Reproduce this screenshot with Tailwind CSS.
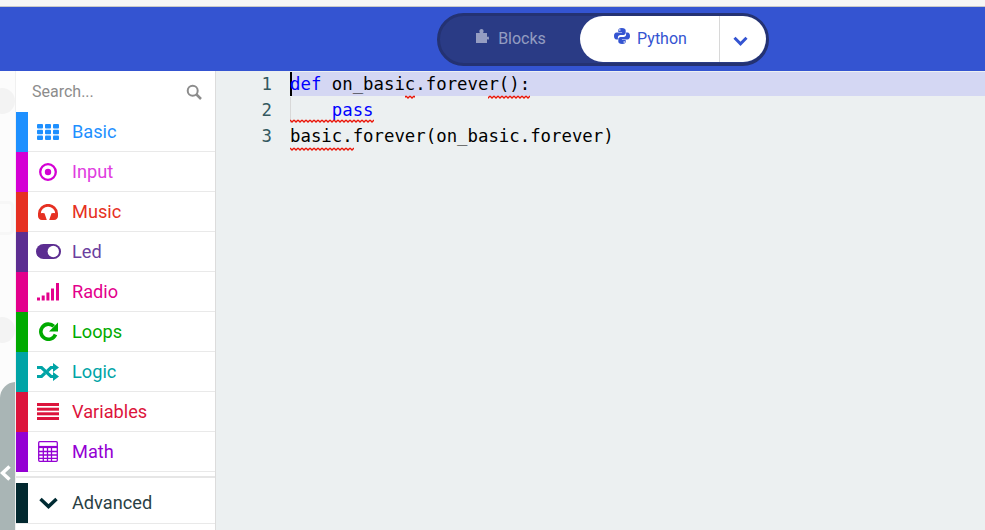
<!DOCTYPE html>
<html lang="en">
<head>
  <meta charset="UTF-8" />
  <title>MakeCode Python editor</title>
  <script src="https://cdn.jsdelivr.net/npm/@tailwindcss/browser@4"></script>
</head>
<body class="h-[530px] w-[985px] overflow-hidden bg-white font-['Roboto',sans-serif]">
  <div class="h-[6px] bg-[#f6f6f6]"></div>
  <div class="h-px bg-[#c9c9c9]"></div>

  <!-- top bar -->
  <header class="h-[64px] bg-[#3454d1] flex justify-center pt-[6px]">
    <div class="ml-[221px] h-[53px] w-[332px] rounded-full bg-[#2a3b85] border-[3px] border-[#243272] flex items-start">
      <div class="w-[140px] h-[46px] flex items-center justify-center gap-[9px] pl-[2px] text-white/50 text-[16px]">
        <svg class="w-[13px] h-[16px] mb-[6px]" viewBox="0 0 13 16" fill="currentColor"><path d="M0 5h4c-1-1-1-4 1.500-4S8 4 7 5h4v4c1-1 2-.5 2 1.200S12 12 11 11v4H0z"/></svg>
        <span>Blocks</span>
      </div>
      <div class="h-[46px] flex-1 rounded-full bg-white flex items-center text-[#3454d1] text-[16px]">
        <div class="flex-1 flex items-center justify-center gap-[7px] pl-[2px]">
          <svg class="w-[16px] h-[16px] mb-[6px]" viewBox="0 0 16 16" fill="currentColor"><path d="M7.900 0C5 0 4.300 1 4.300 2.400V4h3.800v.6H2.600C1 4.600 0 5.800 0 8s1 3.400 2.400 3.400h1.500V9.500c0-1.300 1.100-2.500 2.600-2.500h3c1.200 0 2.200-1 2.200-2.200V2.400C11.700.900 10.400 0 7.900 0zM5.800 1.200a.8.8 0 1 1 0 1.600.8.8 0 0 1 0-1.600z"/><path d="M12.100 4.600v1.900c0 1.300-1.100 2.500-2.600 2.500h-3c-1.200 0-2.200 1-2.200 2.200v2.400c0 1.500 1.300 2.400 3.800 2.400 2.900 0 3.600-1 3.600-2.400V12H7.900v-.6h5.500c1.600 0 2.600-1.200 2.600-3.400s-1-3.400-2.400-3.400zm-1.900 10.200a.8.8 0 1 1 0-1.600.8.8 0 0 1 0 1.600z"/></svg>
          <span>Python</span>
        </div>
        <div class="w-[47px] h-full border-l border-[#d8d8d8] flex items-center justify-center pr-[6px]">
          <svg class="w-[15px] h-[10px] mt-[3px]" viewBox="0 0 15 10" fill="none" stroke="currentColor" stroke-width="3"><path d="M1.500 1.800 7.500 7.800 13.500 1.800"/></svg>
        </div>
      </div>
    </div>
  </header>

  <div class="flex h-[459px]">
    <!-- simulator peeking out behind the toolbox -->
    <div class="w-[16px] relative overflow-hidden bg-[#fcfcfc] shrink-0 border-r border-[#f0f0f0]">
      <div class="absolute left-[-11px] top-[17px] w-[26px] h-[26px] rounded-full bg-[#f3f3f3]"></div>
      <div class="absolute left-[-14px] top-[130px] w-[28px] h-[34px] rounded-[5px] border-[3px] border-[#f7f7f7]"></div>
      <div class="absolute left-[-11px] top-[246px] w-[26px] h-[26px] rounded-full bg-[#f3f3f3]"></div>
      <div class="absolute left-0 top-[311px] w-[24px] h-[148px] rounded-tl-[16px] bg-[#a9b5b5] pt-[83px]">
        <svg class="w-[12px] h-[16px]" viewBox="0 0 12 16" fill="none" stroke="white" stroke-width="3.500"><path d="M9.500 1.500 2.500 8 9.500 14.500"/></svg>
      </div>
    </div>

    <!-- toolbox -->
    <aside class="w-[200px] shrink-0 border-r border-[#dcdcdc] bg-white">
      <div class="h-[41px] flex items-center justify-between pl-[16px] pr-[13px] text-[#8c8c8c] text-[16px]">
        <span>Search...</span>
        <svg class="w-[16px] h-[16px]" viewBox="0 0 16 16" fill="none" stroke="currentColor" stroke-width="2"><circle cx="6.700" cy="6.700" r="5"/><path stroke-width="2.500" d="m10.500 10.500 4.500 4.500"/></svg>
      </div>

      <div class="h-[40px] flex items-center border-b border-[#e9e9e9] text-[#1e90ff]">
        <div class="w-[12px] h-[40px] bg-[#1e90ff]"></div>
        <svg class="w-[22px] h-[16px] ml-[9px]" viewBox="0 0 22 16" fill="currentColor"><rect width="6" height="4.500" rx="1"/><rect x="8" width="6" height="4.500" rx="1"/><rect x="16" width="6" height="4.500" rx="1"/><rect y="5.700" width="6" height="4.500" rx="1"/><rect x="8" y="5.700" width="6" height="4.500" rx="1"/><rect x="16" y="5.700" width="6" height="4.500" rx="1"/><rect y="11.500" width="6" height="4.500" rx="1"/><rect x="8" y="11.500" width="6" height="4.500" rx="1"/><rect x="16" y="11.500" width="6" height="4.500" rx="1"/></svg>
        <span class="ml-[13px] text-[18.200px]">Basic</span>
      </div>
      <div class="h-[40px] flex items-center border-b border-[#e9e9e9] text-[#d400d4]">
        <div class="w-[12px] h-[40px] bg-[#d400d4]"></div>
        <svg class="w-[18px] h-[18px] ml-[11px]" viewBox="0 0 18 18" fill="currentColor"><circle cx="9" cy="9" r="7.800" fill="none" stroke="currentColor" stroke-width="2.300"/><circle cx="9" cy="9" r="3.200"/></svg>
        <span class="ml-[15px] text-[18.200px] text-[#e03ce0]">Input</span>
      </div>
      <div class="h-[40px] flex items-center border-b border-[#e9e9e9] text-[#e63022]">
        <div class="w-[12px] h-[40px] bg-[#e63022]"></div>
        <svg class="w-[20px] h-[16px] ml-[10px]" viewBox="0 0 20 16" fill="currentColor"><path d="M1.400 11V9.500a8.600 8.200 0 0 1 17.200 0V11" fill="none" stroke="currentColor" stroke-width="2.800"/><path d="M0 10Q3 8.600 6.500 9.200L8.800 16H4C1.500 16 0 14 0 12zM20 10Q17 8.600 13.500 9.200L11.200 16H16C18.500 16 20 14 20 12z"/></svg>
        <span class="ml-[14px] text-[18.200px]">Music</span>
      </div>
      <div class="h-[40px] flex items-center border-b border-[#e9e9e9] text-[#5c2d91]">
        <div class="w-[12px] h-[40px] bg-[#5c2d91]"></div>
        <svg class="w-[25px] h-[15px] ml-[8px]" viewBox="0 0 25 15"><rect width="25" height="15" rx="7.500" fill="currentColor"/><circle cx="17.300" cy="7.500" r="5.700" fill="white"/></svg>
        <span class="ml-[11px] text-[18.200px] text-[#6b3fa0]">Led</span>
      </div>
      <div class="h-[40px] flex items-center border-b border-[#e9e9e9] text-[#e3008c]">
        <div class="w-[12px] h-[40px] bg-[#e3008c]"></div>
        <svg class="w-[22px] h-[18px] ml-[9px]" viewBox="0 0 22 18" fill="currentColor"><rect y="14.500" width="3" height="3"/><rect x="4.700" y="12.500" width="3" height="5"/><rect x="9.400" y="9.500" width="3" height="8"/><rect x="14" y="5.500" width="3" height="12"/><rect x="19" y="0" width="3" height="17.500"/></svg>
        <span class="ml-[13px] text-[18.200px]">Radio</span>
      </div>
      <div class="h-[40px] flex items-center border-b border-[#e9e9e9] text-[#00aa00]">
        <div class="w-[12px] h-[40px] bg-[#00aa00]"></div>
        <svg class="w-[19px] h-[19px] ml-[11px]" viewBox="0 0 19 19" fill="none" stroke="currentColor" stroke-width="3.600"><path d="M16.500 12.500A7.600 7.600 0 1 1 14.800 4.300"/><path fill="currentColor" stroke="none" d="M19 .5v9H10z"/></svg>
        <span class="ml-[14px] text-[18.200px]">Loops</span>
      </div>
      <div class="h-[40px] flex items-center border-b border-[#e9e9e9] text-[#00a4a6]">
        <div class="w-[12px] h-[40px] bg-[#00a4a6]"></div>
        <svg class="w-[22px] h-[18px] ml-[9px]" viewBox="0 0 22 18"><path fill="none" stroke="currentColor" stroke-width="3.200" d="M0 4.500h4.500l9.500 9h3M0 13.500h4.500l3.500-3.400M10.500 7.800 14 4.500h3"/><path fill="currentColor" d="M16 0 22 4.500 16 9zM16 9 22 13.500 16 18z"/></svg>
        <span class="ml-[13px] text-[18.200px]">Logic</span>
      </div>
      <div class="h-[40px] flex items-center border-b border-[#e9e9e9] text-[#dc143c]">
        <div class="w-[12px] h-[40px] bg-[#dc143c]"></div>
        <svg class="w-[22px] h-[17px] ml-[9px]" viewBox="0 0 22 17" fill="currentColor"><rect width="22" height="3"/><rect y="4.700" width="22" height="3"/><rect y="9.300" width="22" height="3"/><rect y="14" width="22" height="3"/></svg>
        <span class="ml-[13px] text-[18.200px]">Variables</span>
      </div>
      <div class="h-[40px] flex items-center border-b border-[#e9e9e9] text-[#9400d3]">
        <div class="w-[12px] h-[40px] bg-[#9400d3]"></div>
        <svg class="w-[20px] h-[21px] ml-[10px]" viewBox="0 0 20 21" fill="none" stroke="currentColor" stroke-width="1.300"><rect x=".7" y=".7" width="18.600" height="19.600" rx="1"/><path stroke-width="2.200" d="M1 6h18"/><path d="M1 10.500h18M1 14h18M1 17.300h18M5.300 7v13M9.500 7v13M13.500 7v13"/></svg>
        <span class="ml-[14px] text-[18.200px]">Math</span>
      </div>

      <div class="h-[6px] border-b-2 border-[#e6e6e6]"></div>
      <div class="mt-[5px] h-[41px] flex items-center border-b border-[#e9e9e9] text-[#002b33]">
        <div class="w-[12px] h-[40px] bg-[#02282f]"></div>
        <svg class="w-[19px] h-[12px] ml-[11px]" viewBox="0 0 19 12" fill="none" stroke="currentColor" stroke-width="3.500"><path d="M1.500 2 9.500 9.500 17.500 2"/></svg>
        <span class="ml-[14px] text-[18.200px] text-[#2a3f45]">Advanced</span>
      </div>
    </aside>

    <!-- python editor -->
    <main class="flex-1 bg-[#ecf0f1] relative font-['DejaVu_Sans_Mono',monospace] text-[17.350px] leading-[26px] pt-[1px]">
      <div class="flex h-[24px]">
        <div class="w-[56px] text-right text-[#33585f] leading-[24px]">1</div>
        <div class="ml-[18px] flex-1 h-full bg-[#d4d7f3] border-l-2 border-black -indent-[2px] text-black whitespace-pre leading-[24px]"><span class="text-[#0000ff]">def</span> on_basic.forever():</div>
      </div>
      <div class="flex h-[26px] items-center mt-px">
        <div class="w-[56px] text-right text-[#33585f]">2</div>
        <div class="ml-[18px] flex-1 whitespace-pre text-[#0000ff] border-l border-[#d8d8d8] -indent-[1px]">    pass</div>
      </div>
      <div class="flex h-[26px] items-center">
        <div class="w-[56px] text-right text-[#33585f]">3</div>
        <div class="ml-[18px] flex-1 whitespace-pre text-black">basic.forever(on_basic.forever)</div>
      </div>
      <!-- red squiggles under the errors -->
      <svg class="absolute left-[74px] top-0 w-[300px] h-[80px]" viewBox="0 0 300 80">
        <defs>
          <pattern id="squiggle" width="4" height="4" patternUnits="userSpaceOnUse">
            <path d="M0 1 2 3 4 1" fill="none" stroke="#ea1408" stroke-width="1.300"/>
          </pattern>
        </defs>
        <rect x="115" y="24" width="10" height="4" fill="url(#squiggle)"/>
        <rect x="198" y="24" width="42" height="4" fill="url(#squiggle)"/>
        <rect x="0" y="48" width="84" height="4" fill="url(#squiggle)"/>
        <rect x="0" y="76" width="64" height="4" fill="url(#squiggle)"/>
      </svg>
    </main>
  </div>
</body>
</html>
